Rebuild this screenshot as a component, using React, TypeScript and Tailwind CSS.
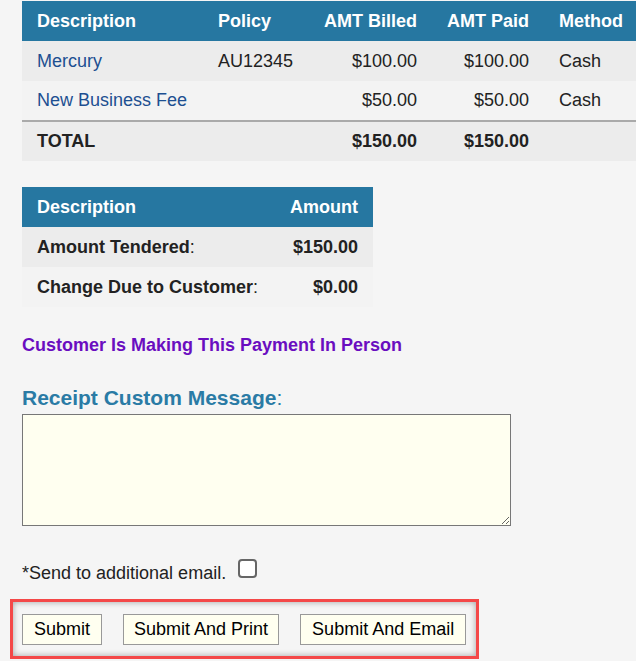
import React from 'react';

const payments = [
  { description: 'Mercury', policy: 'AU12345', billed: '$100.00', paid: '$100.00', method: 'Cash' },
  { description: 'New Business Fee', policy: '', billed: '$50.00', paid: '$50.00', method: 'Cash' },
];

const App = () => {
  return (
    <div className="w-[636px] min-h-[661px] overflow-hidden bg-[#f5f5f5] text-[18px] text-[#222] font-['Liberation_Sans',Arial,sans-serif] pt-px pl-[22px]">
      {/* payment lines */}
      <table className="w-[614px] table-fixed border-collapse">
        <colgroup>
          <col className="w-[181px]" />
          <col className="w-[105px]" />
          <col className="w-[124px]" />
          <col className="w-[112px]" />
          <col className="w-[92px]" />
        </colgroup>
        <thead>
          <tr className="bg-[#2677a1] text-white h-[40px]">
            <th className="text-left font-bold px-[15px]">Description</th>
            <th className="text-left font-bold px-[15px]">Policy</th>
            <th className="text-right font-bold px-[15px] whitespace-nowrap">AMT Billed</th>
            <th className="text-right font-bold px-[15px] whitespace-nowrap">AMT Paid</th>
            <th className="text-left font-bold px-[15px]">Method</th>
          </tr>
        </thead>
        <tbody>
          {payments.map((p, i) => (
            <tr key={i} className={`h-[40px] ${i % 2 === 0 ? 'bg-[#ececec]' : 'bg-[#f3f3f3]'}`}>
              <td className="px-[15px] text-[#1d4f91] whitespace-nowrap">{p.description}</td>
              <td className="px-[15px]">{p.policy}</td>
              <td className="px-[15px] text-right">{p.billed}</td>
              <td className="px-[15px] text-right">{p.paid}</td>
              <td className="px-[15px]">{p.method}</td>
            </tr>
          ))}
          <tr className="h-[40px] bg-[#ececec] border-t-2 border-[#aaaaaa] font-bold">
            <td className="px-[15px]">TOTAL</td>
            <td className="px-[15px]"></td>
            <td className="px-[15px] text-right">$150.00</td>
            <td className="px-[15px] text-right">$150.00</td>
            <td className="px-[15px]"></td>
          </tr>
        </tbody>
      </table>

      {/* tender summary */}
      <table className="w-[351px] border-collapse mt-[26px]">
        <thead>
          <tr className="bg-[#2677a1] text-white h-[40px]">
            <th className="text-left font-bold px-[15px]">Description</th>
            <th className="text-right font-bold px-[15px]">Amount</th>
          </tr>
        </thead>
        <tbody className="font-bold">
          <tr className="h-[40px] bg-[#ececec]">
            <td className="px-[15px] whitespace-nowrap">Amount Tendered<span className="font-normal">:</span></td>
            <td className="px-[15px] text-right">$150.00</td>
          </tr>
          <tr className="h-[40px] bg-[#f3f3f3]">
            <td className="px-[15px] whitespace-nowrap">Change Due to Customer<span className="font-normal">:</span></td>
            <td className="px-[15px] text-right">$0.00</td>
          </tr>
        </tbody>
      </table>

      <p className="mt-[27px] font-bold text-[#6a0dc0] leading-[22px]">Customer Is Making This Payment In Person</p>

      <h3 className="mt-[30px] text-[21px] font-bold text-[#2a7ba5] leading-[24px]">
        Receipt Custom Message<span className="font-normal">:</span>
      </h3>
      <textarea className="block mt-[4px] w-[489px] h-[112px] bg-[#fffff0] border border-[#777] outline-none resize-y"></textarea>

      <div className="mt-[35px] flex items-center h-[24px]">
        <span className="text-[#222]">*Send to additional email.</span>
        <input
          type="checkbox"
          className="appearance-none ml-[12px] mb-[10px] w-[19px] h-[19px] border-2 border-[#666] rounded-[4px] bg-white"
        />
      </div>

      {/* action buttons */}
      <div className="-ml-[12px] mt-[14px] w-[469px] border-[3px] border-[#f44848] shadow-[inset_0_0_6px_rgba(0,0,0,0.35)] pl-[9px] pt-[12px] pb-[11px] flex gap-[21px]">
        <button className="h-[31px] px-[11px] bg-[#fffff0] border border-[#999] text-black text-[18px]">Submit</button>
        <button className="h-[31px] px-[10px] bg-[#fffff0] border border-[#999] text-black text-[18px]">Submit And Print</button>
        <button className="h-[31px] px-[11px] bg-[#fffff0] border border-[#999] text-black text-[18px]">Submit And Email</button>
      </div>
    </div>
  );
};

export default App;
